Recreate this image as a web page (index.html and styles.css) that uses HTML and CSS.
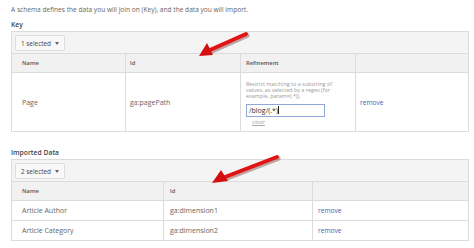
FILE: index.html
```html
<!DOCTYPE html>
<html lang="en">

<head>
    <meta charset="UTF-8">
    <title>Data Set Schema</title>
    <link rel="stylesheet" href="styles.css">
</head>

<body>
    <div class="schema">
        <p class="intro">A schema defines the data you will join on (Key), and the data you will import.</p>

        <h4 class="section-title">Key</h4>
        <div class="grid">
            <div class="toolbar">
                <button class="picker">1 selected <span class="caret"></span></button>
            </div>
            <table class="key-table">
                <tr>
                    <th>Name</th>
                    <th>Id</th>
                    <th>Refinement</th>
                    <th></th>
                </tr>
                <tr class="key-row">
                    <td>Page</td>
                    <td>ga:pagePath</td>
                    <td class="refine">
                        <p class="hint">Restrict matching to a substring of values, as selected by a regex (for example, param=(.*)).</p>
                        <div class="regex">/blog/(.*)<span class="cursor"></span></div>
                        <a class="clear">clear</a>
                    </td>
                    <td><a class="remove">remove</a></td>
                </tr>
            </table>
        </div>

        <h4 class="section-title imported">Imported Data</h4>
        <div class="grid">
            <div class="toolbar">
                <button class="picker">2 selected <span class="caret"></span></button>
            </div>
            <table class="data-table">
                <tr>
                    <th>Name</th>
                    <th>Id</th>
                    <th></th>
                </tr>
                <tr>
                    <td>Article Author</td>
                    <td>ga:dimension1</td>
                    <td><a class="remove">remove</a></td>
                </tr>
                <tr>
                    <td>Article Category</td>
                    <td>ga:dimension2</td>
                    <td><a class="remove">remove</a></td>
                </tr>
            </table>
        </div>
    </div>

    <!-- red callout arrows -->
    <svg class="arrow arrow-key" width="60" height="32" viewBox="0 0 60 32">
        <line x1="50" y1="5" x2="14" y2="21" stroke="#5a1010" stroke-opacity="0.35" stroke-width="5" stroke-linecap="round" transform="translate(1,1.5)"/>
        <line x1="50" y1="5" x2="14" y2="21" stroke="#e01414" stroke-width="4" stroke-linecap="round"/>
        <polygon points="3,27 11,14 17,26" fill="#d50f0f"/>
    </svg>
    <svg class="arrow arrow-data" width="74" height="36" viewBox="0 0 74 36">
        <line x1="67" y1="5" x2="15" y2="25" stroke="#5a1010" stroke-opacity="0.35" stroke-width="5" stroke-linecap="round" transform="translate(1,1.5)"/>
        <line x1="67" y1="5" x2="15" y2="25" stroke="#e01414" stroke-width="4" stroke-linecap="round"/>
        <polygon points="2,31 11,18 18,29" fill="#d50f0f"/>
    </svg>
</body>

</html>
```

FILE: styles.css
```css
body {
    font-family: "Open Sans", Arial, sans-serif;
    margin: 0;
    padding: 0;
    background-color: #fff;
    color: #666;
    position: relative;
    width: 474px;
    height: 248px;
    overflow: hidden;
}

.schema {
    padding: 4px 5px 0 11px;
}

.intro {
    font-size: 6.6px;
    margin: 0;
    height: 12px;
    line-height: 12px;
}

.section-title {
    font-size: 6.8px;
    font-weight: 600;
    color: #444;
    margin: 3px 0 0;
    height: 12px;
    line-height: 12px;
}

.section-title.imported {
    margin-top: 15px;
}

.grid {
    width: 458px;
    border: 1px solid #dcdcdc;
    box-sizing: border-box;
}

.toolbar {
    background-color: #f4f4f4;
    height: 22px;
    padding: 3px 0 0 3px;
    box-sizing: border-box;
    border-bottom: 1px solid #dcdcdc;
}

.picker {
    font-family: inherit;
    font-size: 6.4px;
    color: #444;
    background-color: #f8f8f8;
    border: 1px solid #dedede;
    border-radius: 2px;
    height: 16px;
    padding: 0 5px;
    display: flex;
    align-items: center;
    gap: 4px;
}

.caret {
    width: 0;
    height: 0;
    border-left: 2.5px solid transparent;
    border-right: 2.5px solid transparent;
    border-top: 3px solid #666;
}

table {
    width: 100%;
    border-collapse: collapse;
    table-layout: fixed;
    font-size: 7px;
}

th {
    background-color: #f1f1f1;
    font-size: 5.8px;
    font-weight: 600;
    color: #555;
    text-align: left;
    height: 18px;
    padding: 0 0 0 10px;
    border-right: 1px solid #dcdcdc;
    border-bottom: 1px solid #dcdcdc;
}

td {
    padding: 0 0 0 10px;
    border-right: 1px solid #dcdcdc;
    border-bottom: 1px solid #dcdcdc;
    color: #666;
}

th:last-child,
td:last-child {
    border-right: none;
}

tr:last-child td {
    border-bottom: none;
}

.key-table th:nth-child(2),
.key-table td:nth-child(2) {
    padding-left: 4px;
}

.key-table th:nth-child(3),
.key-table td:nth-child(3) {
    padding-left: 5px;
}

.key-table td:nth-child(4) {
    padding-left: 4px;
}

.key-table th:nth-child(1) { width: 103px; }
.key-table th:nth-child(2) { width: 110px; }
.key-table th:nth-child(3) { width: 109px; }

.key-row td {
    height: 56px;
}

.refine {
    padding-top: 2px;
}

.hint {
    font-size: 5.4px;
    color: #999;
    line-height: 6px;
    margin: 0 0 5px;
    width: 100px;
}

.regex {
    width: 75px;
    height: 11px;
    border: 1px solid #8fa8d8;
    font-size: 7px;
    color: #333;
    line-height: 11px;
    padding-left: 2px;
    box-sizing: content-box;
}

.cursor {
    display: inline-block;
    width: 1px;
    height: 8px;
    background-color: #222;
    vertical-align: -1px;
}

.clear {
    display: block;
    font-size: 6px;
    font-style: italic;
    color: #aaa;
    text-decoration: underline;
    margin: 1px 0 0 6px;
}

.remove {
    color: #3f63b5;
    font-size: 6.6px;
}

.data-table th:nth-child(1) { width: 141px; }
.data-table th:nth-child(2) { width: 142px; }

.data-table th:nth-child(2),
.data-table td:nth-child(2) {
    padding-left: 6px;
}

.data-table th:nth-child(3),
.data-table td:nth-child(3) {
    padding-left: 5px;
}

.data-table td {
    height: 19px;
}

.arrow {
    position: absolute;
}

.arrow-key {
    left: 196px;
    top: 29px;
}

.arrow-data {
    left: 210px;
    top: 152px;
}
```
